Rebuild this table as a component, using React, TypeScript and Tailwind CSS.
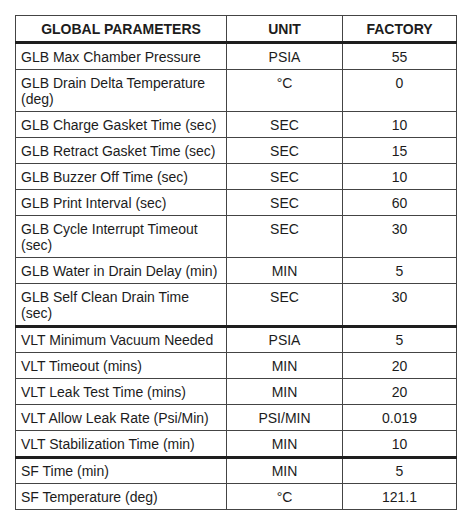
const rows = [
  { name: ["GLB Max Chamber Pressure"], unit: "PSIA", value: "55" },
  { name: ["GLB Drain Delta Temperature", "(deg)"], unit: "°C", value: "0" },
  { name: ["GLB Charge Gasket Time (sec)"], unit: "SEC", value: "10" },
  { name: ["GLB Retract Gasket Time (sec)"], unit: "SEC", value: "15" },
  { name: ["GLB Buzzer Off Time (sec)"], unit: "SEC", value: "10" },
  { name: ["GLB Print Interval (sec)"], unit: "SEC", value: "60" },
  { name: ["GLB Cycle Interrupt Timeout", "(sec)"], unit: "SEC", value: "30" },
  { name: ["GLB Water in Drain Delay (min)"], unit: "MIN", value: "5" },
  { name: ["GLB Self Clean Drain Time", "(sec)"], unit: "SEC", value: "30" },
  { name: ["VLT Minimum Vacuum Needed"], unit: "PSIA", value: "5", section: true },
  { name: ["VLT Timeout (mins)"], unit: "MIN", value: "20" },
  { name: ["VLT Leak Test Time (mins)"], unit: "MIN", value: "20" },
  { name: ["VLT Allow Leak Rate (Psi/Min)"], unit: "PSI/MIN", value: "0.019" },
  { name: ["VLT Stabilization Time (min)"], unit: "MIN", value: "10" },
  { name: ["SF Time (min)"], unit: "MIN", value: "5", section: true },
  { name: ["SF Temperature (deg)"], unit: "°C", value: "121.1" },
];

const App = () => {
  return (
    <div
      className="min-h-[523px] bg-white pl-[15px] pt-[15px] text-[#1c1c1c]"
      style={{ fontFamily: '"Liberation Sans", Arial, sans-serif' }}
    >
      <table className="w-[441px] table-fixed border-collapse text-[14px] leading-[16px]">
        <colgroup>
          <col className="w-[211px]" />
          <col className="w-[116px]" />
          <col className="w-[114px]" />
        </colgroup>
        <thead>
          <tr className="border-b-[3px] border-b-[#1e1e1e]">
            <th className="border border-[#444] pt-[5px] pb-[4px] text-center font-bold">GLOBAL PARAMETERS</th>
            <th className="border border-[#444] pt-[5px] pb-[4px] text-center font-bold">UNIT</th>
            <th className="border border-[#444] pt-[5px] pb-[4px] text-center font-bold">FACTORY</th>
          </tr>
        </thead>
        <tbody>
          {rows.map((row, i) => {
            const pad = row.section ? "pt-[3.5px] pb-[4.5px]" : "py-[4.5px]";
            return (
              <tr
                key={i}
                className={row.section ? "border-t-[3px] border-t-[#1e1e1e]" : ""}
              >
                <td className={`border border-[#444] ${pad} pl-[5px] align-top whitespace-nowrap`}>
                  {row.name.map((line, j) => (
                    <div key={j}>{line}</div>
                  ))}
                </td>
                <td className={`border border-[#444] ${pad} text-center align-top`}>{row.unit}</td>
                <td className={`border border-[#444] ${pad} text-center align-top`}>{row.value}</td>
              </tr>
            );
          })}
        </tbody>
      </table>
    </div>
  );
};

export default App;
